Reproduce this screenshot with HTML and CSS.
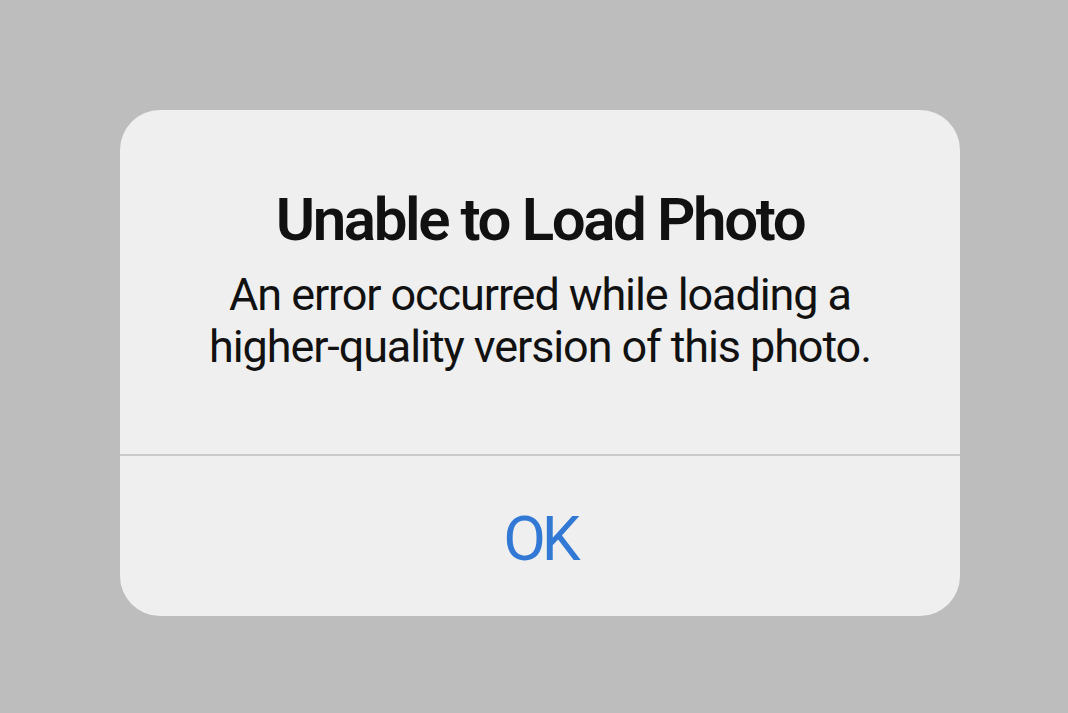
FILE: index.html
```html
<!DOCTYPE html>
<html>
<head>
<meta charset="utf-8">
<link rel="stylesheet" href="styles.css">
</head>
<body>
<div class="stage">
  <div class="alert">
    <div class="alert-content">
      <h1 class="alert-title">Unable to Load Photo</h1>
      <p class="alert-message">An error occurred while loading a<br>higher-quality version of this photo.</p>
    </div>
    <div class="alert-actions">
      <button class="alert-button">OK</button>
    </div>
  </div>
</div>
</body>
</html>
```
FILE: styles.css
```css
html, body {
  margin: 0;
  padding: 0;
  height: 100%;
  background: #bdbdbd;
}
.stage {
  padding: 110px 0 0 120px;
}
.alert {
  width: 840px;
  height: 506px;
  background: #efefef;
  border-radius: 40px;
  display: flex;
  flex-direction: column;
  font-family: Roboto, "Noto Sans", sans-serif;
  color: #111;
  overflow: hidden;
}
.alert-content {
  height: 346px;
  box-sizing: border-box;
  padding-top: 80px;
  text-align: center;
  border-bottom: 2px solid #c9c9c9;
}
.alert-title {
  margin: 0;
  font-size: 60px;
  font-weight: 600;
  line-height: 60px;
  letter-spacing: -2.4px;
}
.alert-message {
  margin: 19px 0 0;
  font-size: 45px;
  font-weight: 400;
  line-height: 52px;
  letter-spacing: -1.1px;
}
.alert-actions {
  flex: 1;
  display: flex;
  align-items: center;
  justify-content: center;
  padding-top: 4px;
}
.alert-button {
  background: none;
  border: 0;
  padding: 0;
  font-family: Roboto, "Noto Sans", sans-serif;
  font-size: 62px;
  font-weight: 400;
  letter-spacing: -4px;
  color: #3279d6;
}
```
